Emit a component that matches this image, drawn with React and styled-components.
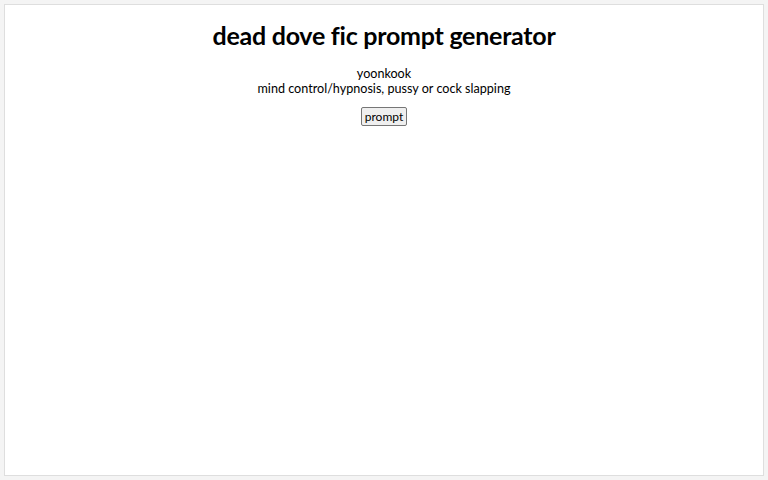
import React, { useState } from 'react';
import styled, { createGlobalStyle } from 'styled-components';

const pairings = ['yoonkook', 'taekook', 'jikook', 'namjin', 'vmin'];
const kinks = [
  'mind control/hypnosis, pussy or cock slapping',
  'praise kink, overstimulation',
  'size difference, breeding',
];

const GlobalStyle = createGlobalStyle`
  html, body {
    margin: 0;
    background: #f4f4f4;
  }
`;

const Frame = styled.div`
  margin: 4px;
  height: 472px;
  box-sizing: border-box;
  background: #fff;
  border: 1px solid #dedede;
  display: flex;
  flex-direction: column;
  align-items: center;
  font-family: Lato, 'Open Sans', sans-serif;
  color: #000;
`;

const Title = styled.h1`
  margin: 15px 0 16px;
  font-size: 25px;
  font-weight: 700;
  letter-spacing: -0.25px;
`;

const Result = styled.p`
  margin: 0;
  font-size: 12.6px;
  line-height: 15px;
  text-align: center;
`;

const PromptButton = styled.button`
  margin-top: 11px;
  font-family: inherit;
  font-size: 12px;
  padding: 1px 3px;
  background: #efefef;
  border: 1px solid #767676;
  border-radius: 2px;
  color: #000;
`;

export default function App() {
  const [pick, setPick] = useState([0, 0]);
  const roll = () =>
    setPick([
      Math.floor(Math.random() * pairings.length),
      Math.floor(Math.random() * kinks.length),
    ]);

  return (
    <>
      <GlobalStyle />
      <Frame>
        <Title>dead dove fic prompt generator</Title>
        <Result>
          {pairings[pick[0]]}
          <br />
          {kinks[pick[1]]}
        </Result>
        <PromptButton onClick={roll}>prompt</PromptButton>
      </Frame>
    </>
  );
}
